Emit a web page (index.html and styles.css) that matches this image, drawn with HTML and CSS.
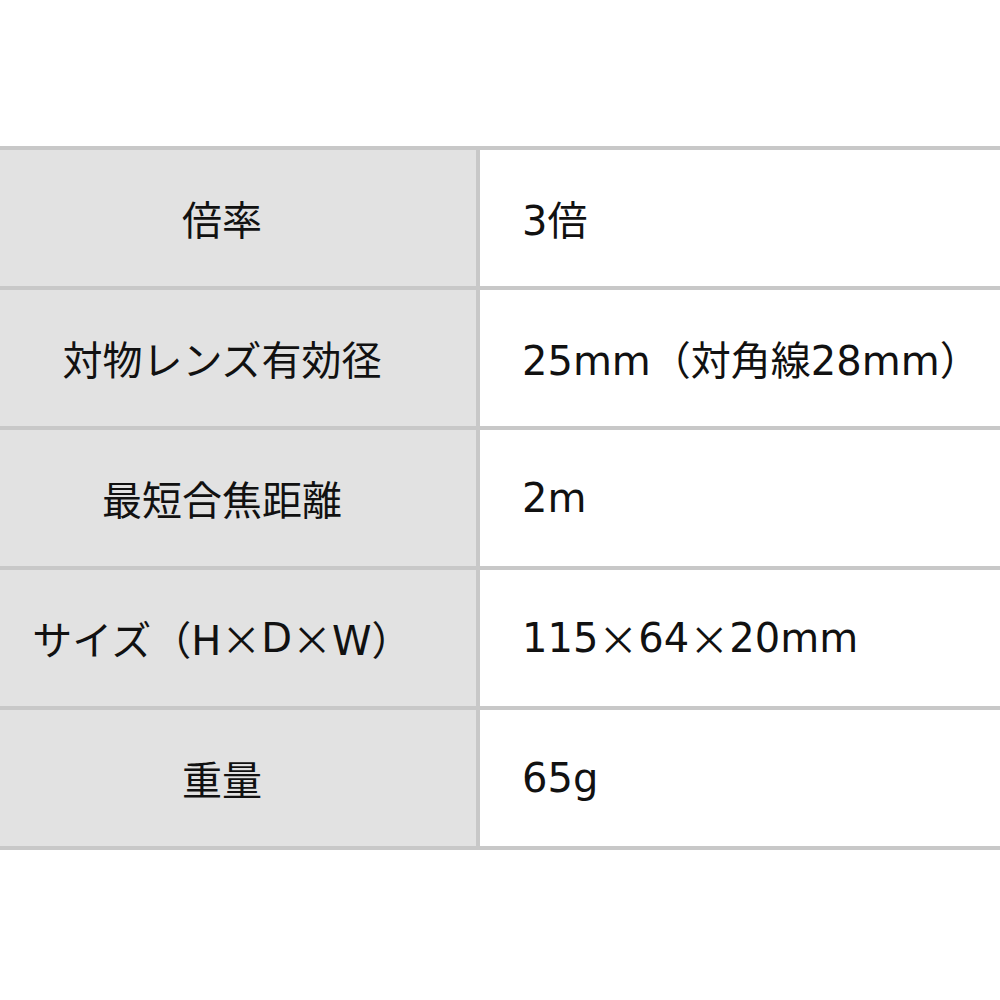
FILE: index.html
```html
<!DOCTYPE html>
<html lang="ja">
<head>
<meta charset="utf-8">
<link rel="stylesheet" href="styles.css">
</head>
<body>
<div class="page">
  <div class="spec">
    <div class="row"><div class="th">倍率</div><div class="td">3倍</div></div>
    <div class="row"><div class="th">対物レンズ有効径</div><div class="td">25mm（対角線28mm）</div></div>
    <div class="row"><div class="th">最短合焦距離</div><div class="td">2m</div></div>
    <div class="row"><div class="th">サイズ（H<span class="x">×</span>D<span class="x">×</span>W）</div><div class="td">115<span class="x">×</span>64<span class="x">×</span>20mm</div></div>
    <div class="row"><div class="th">重量</div><div class="td">65g</div></div>
  </div>
</div>
</body>
</html>
```
FILE: styles.css
```css
html, body {
  margin: 0;
  padding: 0;
  background: #ffffff;
}
.page {
  padding-top: 146px;
  font-family: "DejaVu Sans", "Noto Sans CJK JP", sans-serif;
  color: #111111;
}
.spec {
  width: 1000px;
  border-top: 4px solid #c8c8c8;
}
.row {
  display: flex;
  height: 136px;
  border-bottom: 4px solid #c8c8c8;
}
.th {
  width: 444px;
  padding-right: 32px;
  border-right: 4px solid #c8c8c8;
  background: #e2e2e2;
  display: flex;
  align-items: center;
  justify-content: center;
  font-size: 40px;
  white-space: nowrap;
}
.td {
  flex: 1;
  padding-left: 42px;
  display: flex;
  align-items: center;
  font-size: 40px;
  white-space: nowrap;
}
.x {
  font-family: "Noto Sans CJK JP", sans-serif;
}
```
